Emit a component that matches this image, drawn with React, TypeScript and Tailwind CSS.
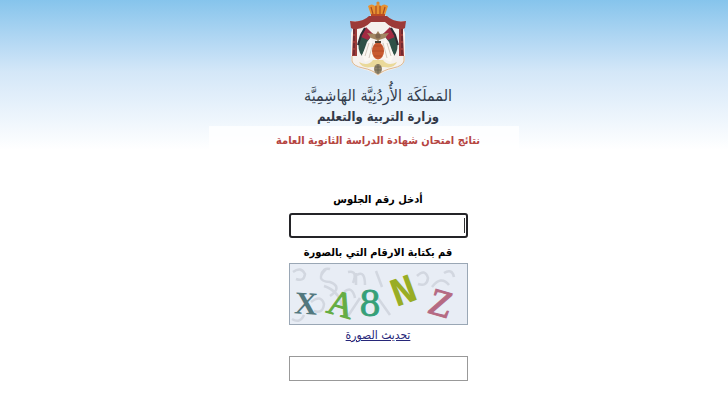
import React from "react";

function Emblem() {
  return (
    <svg viewBox="0 0 60 76" className="block h-[76px] w-[60px]" role="img" aria-label="شعار المملكة">
      <path d="M3 21 Q16 23 23 15 H37 Q44 23 57 21 Q54 27 57 33 V60 Q56 66 46 69 Q36 71 30 76 Q24 71 14 69 Q4 66 3 60 V33 Q6 27 3 21Z" fill="#f5f1ee" />
      <path d="M2 21 Q14 23 21 16 H39 Q46 23 58 21 L57 28 Q53 29 55 34 L56 56 H51 V29 Q43 28 37 22 H23 Q17 28 9 29 V56 H4 L5 34 Q7 29 3 28Z" fill="#9c3a38" />
      <path d="M6 29 V56 M54 29 V56" stroke="#742a30" strokeWidth="2" strokeDasharray="5 2" />
      <path d="M4 56 V61 Q5 66 15 68 Q25 70 30 75 Q35 70 45 68 Q55 66 56 61 V56" fill="none" stroke="#dcb78e" />
      <path d="M23 15 L20 6 Q24 3 27 6 Q30 2 33 6 Q36 3 40 6 L37 15Z" fill="#e79131" />
      <path d="M25 14 L23 7 M28 14 L28 6 M32 14 L32 6 M35 14 L37 7" stroke="#a94c20" strokeWidth="1.2" />
      <path d="M23 15 H37" stroke="#bd4b23" strokeWidth="2" />
      <circle cx="30" cy="3" r="1.6" fill="#d98a35" />
      <path d="M25 34 L17 28 L11 41 Q9 50 14 56 L19 42Z" fill="#2f5147" />
      <path d="M25 34 L18 27 L13 37 L20 40Z" fill="#a22b42" />
      <path d="M17 28 L13 35 L10 45" stroke="#2c2b33" strokeWidth="2" fill="none" />
      <path d="M35 34 L43 28 L49 41 Q51 50 46 56 L41 42Z" fill="#2f5147" />
      <path d="M35 34 L42 27 L47 37 L40 40Z" fill="#a22b42" />
      <path d="M43 28 L47 35 L50 45" stroke="#2c2b33" strokeWidth="2" fill="none" />
      <path d="M23 38 L14 55 L17 62 L27 58Z M37 38 L46 55 L43 62 L33 58Z" fill="#fbf8f2" />
      <path d="M21 43 L17 56 M25 43 L21 58 M39 43 L43 56 M35 43 L39 58" stroke="#c9bdb0" strokeWidth="0.8" />
      <path d="M19 33 L28 34 L30 31 L32 34 L41 33 L37 38 L31 40 L30 43 L29 40 L23 38Z" fill="#a28562" />
      <circle cx="30" cy="36" r="2.6" fill="#7e6650" />
      <ellipse cx="30" cy="51" rx="6" ry="8.5" fill="#c85a30" />
      <path d="M27 42 H33" stroke="#4e4436" strokeWidth="2" />
      <path d="M26 46 H34 M24 51 H36 M26 56 H34" stroke="#9c3d24" strokeWidth="0.8" opacity="0.6" />
      <path d="M11 62 Q20 67 25 60 H35 Q40 67 49 62 Q46 69 36 67 H24 Q14 69 11 62Z" fill="#ead99a" />
      <ellipse cx="30" cy="69" rx="4" ry="5" fill="#91846a" />
      <path d="M27 67 H33 M27 70 H33 M30 64 V74" stroke="#625e4e" strokeWidth="0.7" />
    </svg>
  );
}

function Captcha() {
  return (
    <svg viewBox="0 0 177 60" className="block h-[60px] w-full overflow-visible bg-[#e8edf5]" role="img" aria-label="XA8NZ">
      <g fill="none" stroke="#c3c8d2" strokeWidth="2.5" opacity="0.6">
        <path d="M3 8 q8 -6 12 2 q-1 8 -9 5 M31 12 q2 -9 9 -7 M36 5 q-12 12 4 13 q13 5 0 14 M58 8 q10 -2 5 11 M66 9 v12 M67 11 q8 -5 8 10 M86 7 l6 16 M21 38 q10 -8 13 2 q-1 10 -10 7 M34 22 q15 5 18 20 M54 28 q8 -7 11 6 M58 52 l12 -18 M88 34 l12 17 M127 12 q8 -8 11 2 q-1 9 -10 6 M142 23 q9 -12 17 -2 M2 55 q8 5 12 -4 M154 9 q8 -5 10 4" />
      </g>
      <g textAnchor="middle">
        <text x="16" y="50" fontSize="32" fontWeight="bold" fill="#52787e" className="font-['Liberation_Serif',serif]" transform="rotate(4 16 40)">X</text>
        <text x="51" y="52" fontSize="36" fill="#65ad43" stroke="#65ad43" className="font-['Liberation_Serif',serif]" transform="rotate(16 51 40)">A</text>
        <text x="80" y="52" fontSize="41" fill="#36a078" stroke="#36a078" strokeWidth="0.8" className="font-['Liberation_Serif',serif]">8</text>
        <text x="113" y="40" fontSize="41" fontWeight="bold" fill="#99ad25" className="font-['Liberation_Mono',monospace]" transform="rotate(-20 113 26)">N</text>
        <text x="151" y="52" fontSize="38" fill="#b56a83" stroke="#b56a83" className="font-['Liberation_Serif',serif]" transform="rotate(16 151 39)">Z</text>
      </g>
    </svg>
  );
}

export default function App() {
  return (
    <div dir="rtl" className="min-h-screen bg-white bg-linear-to-b from-[#86c4ec] via-[#d4e7f8] via-[72px] to-white to-[150px] font-['DejaVu_Sans_Condensed','DejaVu_Sans',sans-serif] text-black">
      <header className="flex flex-col items-center">
        <div className="flex flex-col items-center pl-7">
          <Emblem />
          <p className="mt-2 h-6 text-base leading-6 text-[#333d4c]">المَملَكَة الأُردُنِيَّة الهَاشِمِيَّة</p>
          <p className="h-[18px] text-[13px] leading-[18px] font-bold text-[#333948]">وزارة التربية والتعليم</p>
        </div>
        <h1 className="h-[30px] w-[310px] bg-white/80 pl-7 text-center text-[11px] leading-[30px] font-bold whitespace-nowrap text-[#b5443f]">نتائج امتحان شهادة الدراسة الثانوية العامة</h1>
      </header>
      <div className="flex justify-center pt-8 pl-7">
        <form className="flex w-[179px] flex-col items-center" onSubmit={(e) => e.preventDefault()}>
          <label htmlFor="seat" className="h-[25px] text-[11px] leading-6 font-bold whitespace-nowrap">أدخل رقم الجلوس</label>
          <div className="relative w-full">
            <input id="seat" type="text" className="block h-[25px] w-full rounded-[3px] border-2 border-[#242428] bg-white px-1 text-xs outline-none" />
            <span className="absolute top-[5px] right-[3px] h-[15px] w-px bg-[#333]" />
          </div>
          <label htmlFor="code" className="h-[25px] text-[11px] leading-[30px] font-bold whitespace-nowrap">قم بكتابة الارقام التي بالصورة</label>
          <div className="w-full border border-[#9aa7b5]"><Captcha /></div>
          <a href="#" className="h-[31px] text-xs leading-5 text-[#272779] underline">تحديث الصورة</a>
          <input id="code" type="text" className="block h-[25px] w-full border border-[#999] bg-white px-1 text-xs outline-none" />
        </form>
      </div>
    </div>
  );
}
